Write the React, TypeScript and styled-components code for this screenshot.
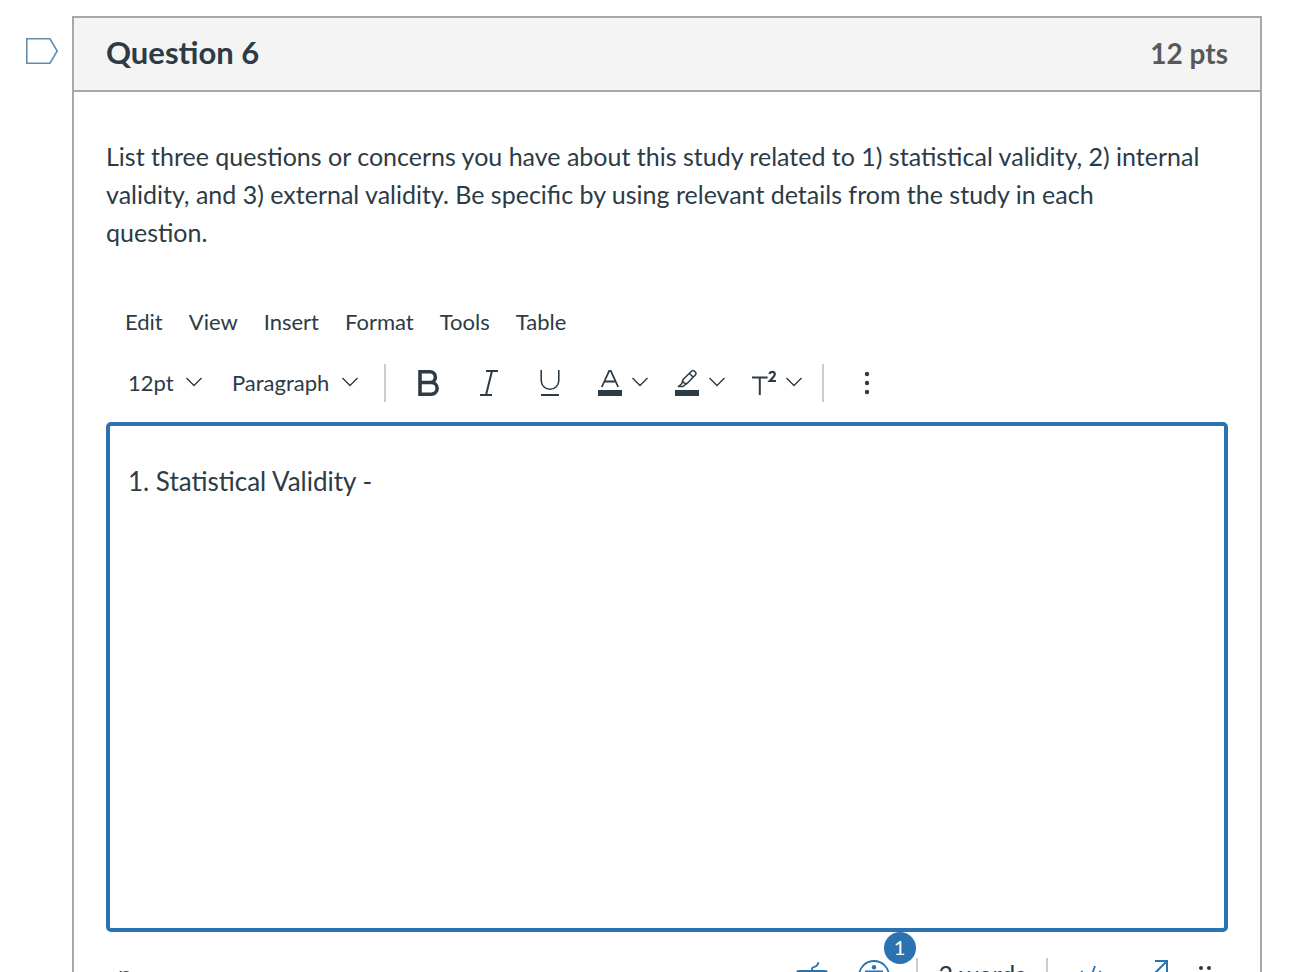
import React from "react";
import styled, { createGlobalStyle } from "styled-components";

const ink = "#2d3b45";
const blue = "#2b72b1";

const GlobalStyle = createGlobalStyle`
  *, *::before, *::after { box-sizing: border-box; }
  body { margin: 0; background: #fff; color: ${ink}; font-family: Lato, "Liberation Sans", sans-serif; }
  button, select, textarea { margin: 0; padding: 0; border: 0; background: none; color: inherit; font: inherit; }
  svg { display: block; flex: none; }
`;

const Page = styled.main`
  display: flex;
  align-items: flex-start;
  height: 100vh;
  overflow: hidden;
  padding: 16px 50px 0 26px;
`;

const FlagButton = styled.button`
  flex: none;
  width: 46px;
  padding-top: 22px;
`;

const Card = styled.section`
  flex: 1;
  min-width: 0;
  border: 2px solid #a8a8a8;
`;

const CardHeader = styled.header`
  display: flex;
  align-items: baseline;
  justify-content: space-between;
  height: 74px;
  padding: 15px 32px 0;
  background: #f4f4f4;
  border-bottom: 2px solid #a8a8a8;
`;

const Title = styled.h2`
  margin: 0;
  font-size: 31px;
  line-height: 38px;
  font-weight: 700;
`;

const Points = styled.span`
  font-size: 28px;
  line-height: 38px;
  font-weight: 700;
  color: #595959;
`;

const CardBody = styled.div`
  padding: 45px 32px 32px;
`;

const Prompt = styled.p`
  margin: 0 0 53px;
  font-size: 25px;
  line-height: 38px;
`;

const MenuBar = styled.nav`
  display: flex;
  gap: 26px;
  padding: 0 19px;
  font-size: 22px;
  line-height: 36px;
`;

const Toolbar = styled.div`
  display: flex;
  align-items: center;
  height: 38px;
  margin: 24px 0 20px;
  padding-left: 22px;
`;

const SelectBox = styled.label`
  display: flex;
  align-items: center;
  gap: 12px;
  margin-right: 30px;
  font-size: 22px;
  &:nth-of-type(2) { margin-right: 26px; }
`;

const Select = styled.select`
  appearance: none;
  height: 38px;
  line-height: 38px;
`;

const Separator = styled.span`
  flex: none;
  width: 2px;
  height: 38px;
  background: #c7cdd1;
`;

const ButtonGroup = styled.div<{ $gap: number }>`
  display: flex;
  gap: ${(p) => p.$gap}px;
`;

const FormatGroup = styled(ButtonGroup)`
  margin: 0 18px 0 12px;
`;

const SplitGroup = styled(ButtonGroup)`
  margin-right: 20px;
`;

const IconButton = styled.button`
  display: flex;
  align-items: center;
  justify-content: center;
  width: 60px;
  height: 38px;
`;

const MoreButton = styled(IconButton)`
  margin-left: 13px;
`;

const SplitButton = styled.button`
  display: flex;
  align-items: center;
  gap: 10px;
  height: 38px;
`;

const Editor = styled.textarea`
  display: block;
  width: 100%;
  height: 510px;
  padding: 36px 18px;
  border: 4px solid ${blue};
  border-radius: 5px;
  outline: none;
  resize: none;
  font-size: 26px;
  line-height: 38px;
`;

const StatusBar = styled.footer`
  display: flex;
  align-items: center;
  height: 38px;
  margin-top: 26px;
  padding: 0 16px 0 12px;
  font-size: 25px;
  line-height: 32px;
`;

const Path = styled.span`
  flex: 1;
  padding-bottom: 6px;
`;

const StatusButton = styled.button<{ $gap: number }>`
  position: relative;
  color: ${blue};
  margin-right: ${(p) => p.$gap}px;
`;

const Badge = styled.span`
  position: absolute;
  left: 26px;
  top: -28px;
  width: 32px;
  height: 32px;
  border-radius: 50%;
  background: ${blue};
  color: #fff;
  font-size: 20px;
  line-height: 30px;
  text-align: center;
`;

const WordCount = styled.span`
  margin: 0 20px 0 21px;
  padding-bottom: 6px;
`;

const CodeButton = styled(StatusButton)`
  margin-left: 27px;
`;

const Chevron = () => (
  <svg width="16" height="12" viewBox="0 0 16 12" fill="none" stroke={ink} strokeWidth="1.4">
    <path d="M.5 1 8 8.5 15.5 1" />
  </svg>
);

const Icon = ({ children }: { children: React.ReactNode }) => (
  <svg width="24" height="28" viewBox="0 0 24 28" fill="none" stroke={ink} strokeWidth="2">
    {children}
  </svg>
);

const menus = ["Edit", "View", "Insert", "Format", "Tools", "Table"];

export default function App() {
  return (
    <>
      <GlobalStyle />
      <Page>
        <FlagButton aria-label="Flag question">
          <svg width="32" height="26" viewBox="0 0 32 26" fill="#fff" stroke="#648dab" strokeWidth="1.6">
            <path d="M.8 .8H24L31.2 13 24 25.2H.8Z" />
          </svg>
        </FlagButton>
        <Card>
          <CardHeader>
            <Title>Question 6</Title>
            <Points>12 pts</Points>
          </CardHeader>
          <CardBody>
            <Prompt>
              List three questions or concerns you have about this study related to 1) statistical validity, 2)
              internal
              <br />
              validity, and 3) external validity. Be specific by using relevant details from the study in each
              <br />
              question.
            </Prompt>
            <MenuBar aria-label="Editor menu">
              {menus.map((m) => (
                <button key={m}>{m}</button>
              ))}
            </MenuBar>
            <Toolbar role="toolbar" aria-label="Formatting">
              <SelectBox>
                <Select aria-label="Font size">
                  <option>12pt</option>
                </Select>
                <Chevron />
              </SelectBox>
              <SelectBox>
                <Select aria-label="Block style">
                  <option>Paragraph</option>
                </Select>
                <Chevron />
              </SelectBox>
              <Separator />
              <FormatGroup $gap={1}>
                <IconButton aria-label="Bold">
                  <Icon>
                    <path strokeWidth="3.6" d="M4 2.8V25.2H15.3A5.85 5.85 0 0 0 15.3 13.5H4H14A5.35 5.35 0 0 0 14 2.8Z" />
                  </Icon>
                </IconButton>
                <IconButton aria-label="Italic">
                  <Icon>
                    <path d="M9 2H21M3 26H15M15 2 9 26" />
                  </Icon>
                </IconButton>
                <IconButton aria-label="Underline">
                  <Icon>
                    <path strokeWidth="1.6" d="M3.2 1V11.5A8.8 8.8 0 0 0 20.8 11.5V1" />
                    <path d="M3 26H21" />
                  </Icon>
                </IconButton>
              </FormatGroup>
              <SplitGroup $gap={27}>
                <SplitButton aria-label="Text color">
                  <Icon>
                    <path strokeWidth="1.8" d="M3.8 18 11.2 1.8H12.8L20.2 18M6.6 12.5H17.4" />
                    <path fill={ink} stroke="none" d="M0 21H24V27H0Z" />
                  </Icon>
                  <Chevron />
                </SplitButton>
                <SplitButton aria-label="Highlight color">
                  <Icon>
                    <path
                      strokeWidth="1.5"
                      strokeLinejoin="round"
                      d="M8 10.5 16.5 2.2Q18 .9 19.5 2.2L20.3 3Q21.7 4.5 20.3 6L12.3 14.2Q10.5 15.2 9 13.8 7.2 12.3 8 10.5ZM8 10.8 6.7 14.8 3.4 17.6H8.2L9.8 15.8 12 14.5M14.5 4.5 18 8"
                    />
                    <path fill={ink} stroke="none" d="M0 21H24V27H0Z" />
                  </Icon>
                  <Chevron />
                </SplitButton>
                <SplitButton aria-label="Superscript">
                  <Icon>
                    <path strokeWidth="2" d="M0 8.5H15.6M7.8 8.5V26" />
                    <path strokeWidth="2.2" d="M17.4 5Q18 2.8 20.3 2.8 22.8 2.8 22.8 5.2 22.8 6.5 21 8.4L17.8 12H24" />
                  </Icon>
                  <Chevron />
                </SplitButton>
              </SplitGroup>
              <Separator />
              <MoreButton aria-label="More">
                <svg width="6" height="24" viewBox="0 0 6 24" fill={ink}>
                  <circle cx="3" cy="3" r="2.2" />
                  <circle cx="3" cy="12" r="2.2" />
                  <circle cx="3" cy="21" r="2.2" />
                </svg>
              </MoreButton>
            </Toolbar>
            <Editor aria-label="Answer" spellCheck={false} defaultValue="1. Statistical Validity -" />
            <StatusBar>
              <Path>p</Path>
              <StatusButton $gap={30} aria-label="Keyboard shortcuts">
                <svg width="32" height="34" viewBox="0 0 32 34" fill="none" stroke={blue} strokeWidth="1.8">
                  <path d="M3 11H29Q31 11 31 13V28H1V13Q1 11 3 11ZM16 10.5V9Q16 7.2 18.5 6.8 21.5 6 22.5 2.3M6 17H26M6 22H26" />
                </svg>
              </StatusButton>
              <StatusButton $gap={26} aria-label="Accessibility checker">
                <svg width="32" height="34" viewBox="0 0 32 34" fill="none" stroke={blue} strokeWidth="1.8">
                  <circle cx="16" cy="16" r="15" />
                  <circle cx="16" cy="7.2" r="2.2" fill={blue} stroke="none" />
                  <path strokeWidth="2" d="M7 11.4H25M13 12V26M19 12V26M13 19H19" />
                </svg>
                <Badge>1</Badge>
              </StatusButton>
              <Separator />
              <WordCount>2 words</WordCount>
              <Separator />
              <CodeButton $gap={31} aria-label="HTML editor">
                <svg width="32" height="24" viewBox="0 0 32 24" fill="none" stroke={blue} strokeWidth="1.8">
                  <path d="M7.5 6 2 12 7.5 18M24.5 6 30 12 24.5 18M20 1 12 23" />
                </svg>
              </CodeButton>
              <StatusButton $gap={28} aria-label="Fullscreen">
                <svg width="32" height="34" viewBox="0 0 32 34" fill="none" stroke={blue} strokeWidth="2">
                  <path d="M17 1H29V14M29 1 2 28M2 16V28H14" />
                </svg>
              </StatusButton>
              <StatusButton $gap={0} aria-label="Resize editor">
                <svg width="14" height="24" viewBox="0 0 14 24" fill={ink}>
                  <circle cx="3" cy="3" r="2" />
                  <circle cx="11" cy="3" r="2" />
                  <circle cx="3" cy="12" r="2" />
                  <circle cx="11" cy="12" r="2" />
                  <circle cx="3" cy="21" r="2" />
                  <circle cx="11" cy="21" r="2" />
                </svg>
              </StatusButton>
            </StatusBar>
          </CardBody>
        </Card>
      </Page>
    </>
  );
}
